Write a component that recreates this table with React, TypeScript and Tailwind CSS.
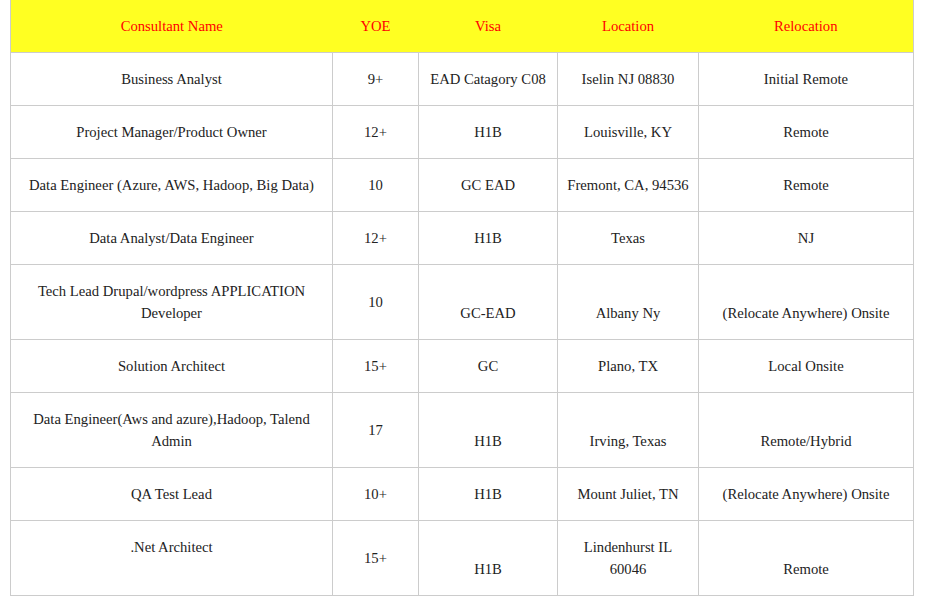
type Row = {
  name: string[];
  yoe: string[];
  visa: string[];
  location: string[];
  relocation: string[];
};

const rows: Row[] = [
  { name: ["Business Analyst"], yoe: ["9+"], visa: ["EAD Catagory C08"], location: ["Iselin NJ 08830"], relocation: ["Initial Remote"] },
  { name: ["Project Manager/Product Owner"], yoe: ["12+"], visa: ["H1B"], location: ["Louisville, KY"], relocation: ["Remote"] },
  { name: ["Data Engineer (Azure, AWS, Hadoop, Big Data)"], yoe: ["10"], visa: ["GC EAD"], location: ["Fremont, CA, 94536"], relocation: ["Remote"] },
  { name: ["Data Analyst/Data Engineer"], yoe: ["12+"], visa: ["H1B"], location: ["Texas"], relocation: ["NJ"] },
  {
    name: ["Tech Lead Drupal/wordpress APPLICATION", "Developer"],
    yoe: ["10"],
    visa: ["", "GC-EAD"],
    location: ["", "Albany Ny"],
    relocation: ["", "(Relocate Anywhere) Onsite"],
  },
  { name: ["Solution Architect"], yoe: ["15+"], visa: ["GC"], location: ["Plano, TX"], relocation: ["Local Onsite"] },
  {
    name: ["Data Engineer(Aws and azure),Hadoop, Talend", "Admin"],
    yoe: ["17"],
    visa: ["", "H1B"],
    location: ["", "Irving, Texas"],
    relocation: ["", "Remote/Hybrid"],
  },
  { name: ["QA Test Lead"], yoe: ["10+"], visa: ["H1B"], location: ["Mount Juliet, TN"], relocation: ["(Relocate Anywhere) Onsite"] },
  {
    name: [".Net Architect", ""],
    yoe: ["15+"],
    visa: ["", "H1B"],
    location: ["Lindenhurst IL", "60046"],
    relocation: ["", "Remote"],
  },
];

const Lines = ({ lines }: { lines: string[] }) => (
  <>
    {lines.map((l, i) => (
      <div key={i} className="h-[22px] leading-[22px] whitespace-nowrap">
        {l || "\u00a0"}
      </div>
    ))}
  </>
);

const cell = "border border-[#cccccc] px-2 py-[15px] text-center align-middle";
const headCell = "px-2 py-[15px] text-center align-middle font-normal text-[#ff0000] leading-[22px]";

export default function App() {
  return (
    <div className="bg-white w-[926px] h-[597px] overflow-hidden pl-[10px] [font-family:'Liberation_Serif',serif] text-[14.67px] text-[#222222]">
      <table className="table-fixed border-collapse w-[903px] border-x border-b border-[#cccccc]">
        <colgroup>
          <col className="w-[322px]" />
          <col className="w-[86px]" />
          <col className="w-[139px]" />
          <col className="w-[141px]" />
          <col className="w-[215px]" />
        </colgroup>
        <thead>
          <tr className="bg-[#ffff22] h-[52px]">
            <th className={headCell}>Consultant Name</th>
            <th className={headCell}>YOE</th>
            <th className={headCell}>Visa</th>
            <th className={headCell}>Location</th>
            <th className={headCell}>Relocation</th>
          </tr>
        </thead>
        <tbody>
          {rows.map((r, i) => (
            <tr key={i}>
              <td className={cell}><Lines lines={r.name} /></td>
              <td className={cell}><Lines lines={r.yoe} /></td>
              <td className={cell}><Lines lines={r.visa} /></td>
              <td className={cell}><Lines lines={r.location} /></td>
              <td className={cell}><Lines lines={r.relocation} /></td>
            </tr>
          ))}
        </tbody>
      </table>
    </div>
  );
}
